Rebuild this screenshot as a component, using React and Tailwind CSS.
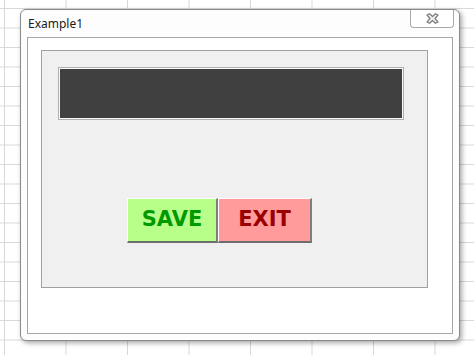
export default function App() {
    return (
        <div className="relative w-[474px] h-[355px] overflow-hidden bg-white bg-[linear-gradient(to_right,#d9d9d9_1px,transparent_1px),linear-gradient(to_bottom,#d9d9d9_1px,transparent_1px)] bg-[length:61.5px_19.5px] bg-[position:4px_8px] pl-[20px] pt-[9px]">
            <div className="flex flex-col w-[440px] h-[332px] bg-[#fdfdfd] border border-[#8a8a8a] rounded-[6px] shadow-[2px_2px_5px_rgba(0,0,0,0.35)] px-[6px] pb-[6px]">
                <div className="flex h-[27px] items-start justify-between">
                    <span className="mt-[5px] ml-[1px] text-[12px] text-[#1a1a1a] font-['Noto_Sans',sans-serif]">Example1</span>
                    <div className="flex items-center justify-center w-[44px] h-[18px] -mr-[1px] border border-t-0 border-[#a9a9a9] rounded-b-[4px] bg-white">
                        <svg width="13" height="11" viewBox="0 0 13 11">
                            <path
                                d="M1 2 L3.5 0.7 L6.5 3.5 L9.5 0.7 L12 2 L9 5.5 L12 9 L9.5 10.3 L6.5 7.5 L3.5 10.3 L1 9 L4 5.5 Z"
                                fill="#f2f2f2"
                                stroke="#7c7c7c"
                                strokeWidth="1.2"
                                strokeLinejoin="round"
                            />
                        </svg>
                    </div>
                </div>
                <div className="flex-1 bg-white border border-[#a6a6a6] pl-[13px] pt-[12px]">
                    <div className="w-[387px] h-[238px] bg-[#f0f0f0] border border-[#a0a0a0] pl-[16px] pt-[16px]">
                        <div className="w-[346px] h-[53px] border border-[#b0b0b0] p-[1px] bg-[#f8f8f8]">
                            <div className="w-full h-full bg-[#404040]"></div>
                        </div>
                        <div className="flex ml-[69px] mt-[78px] font-['DejaVu_Sans',sans-serif] font-bold text-[21px]">
                            <button className="flex items-center justify-center w-[91px] h-[45px] bg-[#b8ff8a] text-[#009a00] border-t border-l border-t-white border-l-white border-r-2 border-b-2 border-r-[#7e7e7e] border-b-[#6e6e6e]">
                                SAVE
                            </button>
                            <button className="flex items-center justify-center w-[94px] h-[45px] bg-[#ff9b9b] text-[#9a0000] border-t border-l border-t-white border-l-white border-r-2 border-b-2 border-r-[#7e7e7e] border-b-[#6e6e6e]">
                                EXIT
                            </button>
                        </div>
                    </div>
                </div>
            </div>
        </div>
    );
}
